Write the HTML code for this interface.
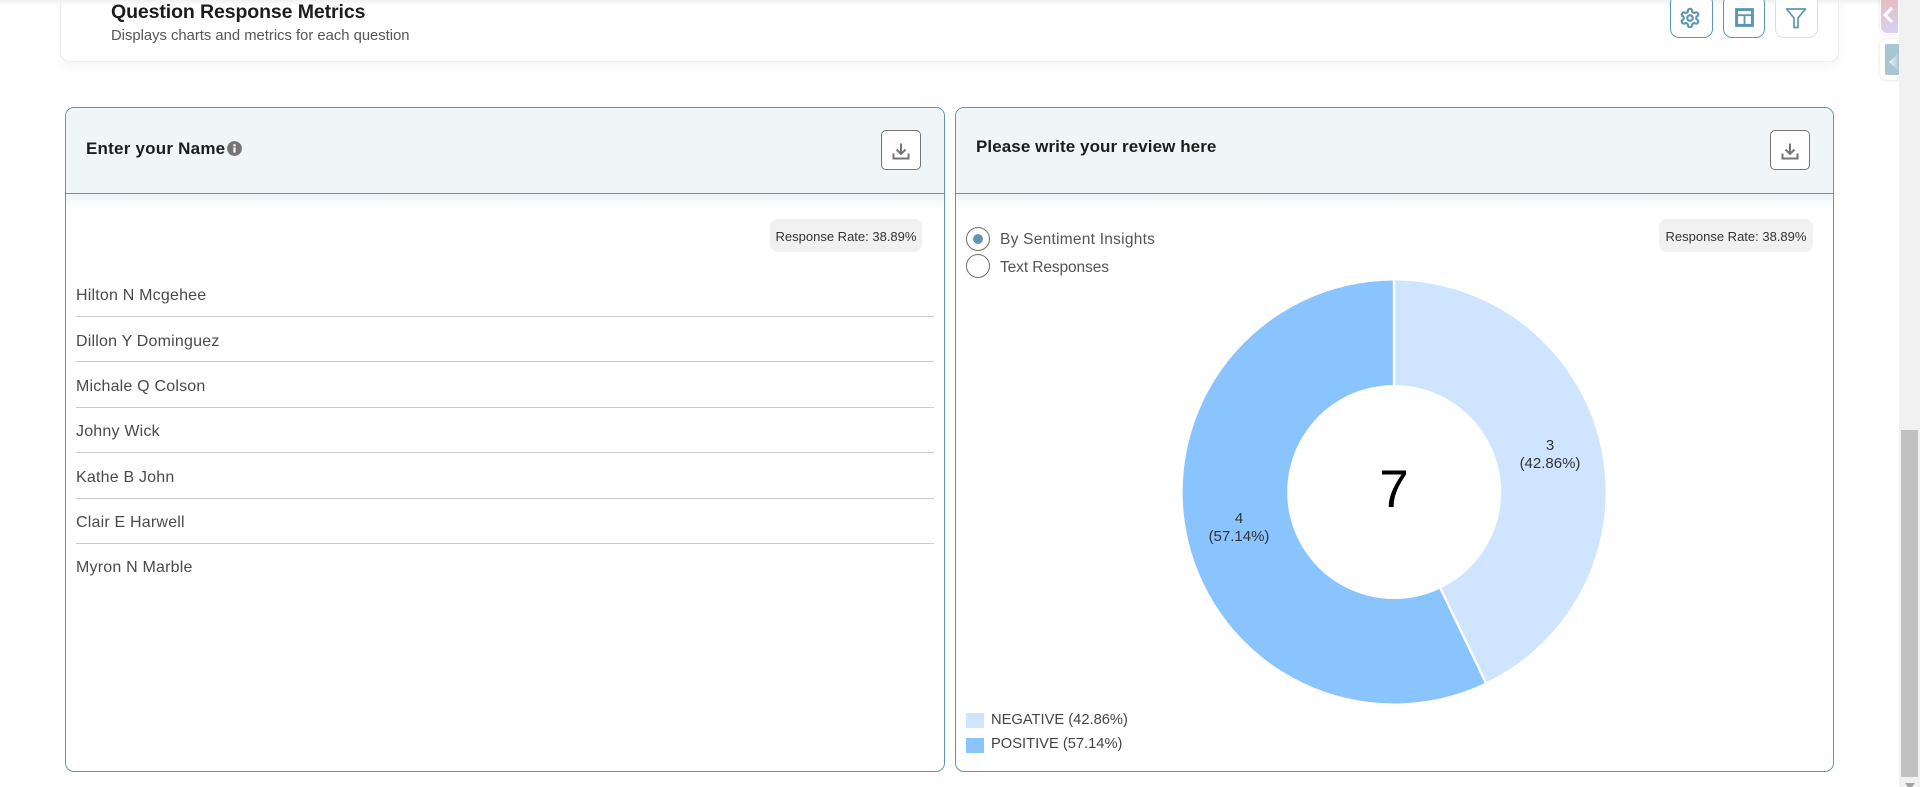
<!DOCTYPE html>
<html lang="en">
<head>
<meta charset="utf-8">
<title>Question Response Metrics</title>
<style>
*{box-sizing:border-box}
html,body{margin:0;padding:0;width:1920px;height:787px;overflow:hidden;background:#fff;font-family:"Liberation Sans",Arial,sans-serif;color:#444}
.a{position:absolute;white-space:nowrap}
.card{position:absolute;left:60px;top:-40px;width:1779px;height:102px;background:#fff;border:1px solid #ebedef;border-radius:10px;box-shadow:0 5px 10px rgba(60,70,90,.05)}
.topshade{position:absolute;left:0;top:0;width:1899px;height:6px;background:linear-gradient(#f1f1f2,rgba(255,255,255,0))}
.panel{position:absolute;top:107px;height:665px;background:#fff;border:1px solid #5f97b3;border-radius:9px;overflow:hidden}
.phead{position:absolute;left:0;top:0;right:0;height:86px;background:#f0f5f8;border-bottom:1px solid #5f97b3}
.pshade{position:absolute;left:0;right:0;top:86px;height:16px;background:linear-gradient(#eff4f7,rgba(255,255,255,0))}
.dl{position:absolute;top:130px;width:40px;height:40px;border:1px solid #757575;border-radius:5px;background:#fff}
.pill{position:absolute;top:219px;height:33px;width:152px;background:#f1f1f1;border-radius:8px;font-size:13px;line-height:35px;color:#333;text-align:center}
.title{font-weight:bold;font-size:17px;line-height:20px;color:#1c1c1c}
.row{position:absolute;left:76px;font-size:16px;letter-spacing:.2px;line-height:20px;color:#4a4a4a;white-space:nowrap}
.line{position:absolute;left:76px;width:858px;height:1px;background:#c9c9c9}
.ib{position:absolute;top:-6px;width:43px;height:44px;border:1px solid #5f97b3;border-radius:9px;background:#fff}
.radio{position:absolute;left:966px;width:24px;height:24px;border:1px solid #6f6f6f;border-radius:50%;background:#fff}
.lab{position:absolute;left:1000px;font-size:15.5px;line-height:20px;color:#555;white-space:nowrap}
.leg{position:absolute;left:991px;font-size:14.7px;line-height:18px;color:#444;white-space:nowrap}
</style>
</head>
<body>

<div class="card"></div>
<div class="topshade"></div>

<div class="a" style="left:111px;top:0;font-weight:bold;font-size:19.5px;line-height:24px;color:#1c1c1c;letter-spacing:-.1px">Question Response Metrics</div>
<div class="a" style="left:111px;top:27px;font-size:14.8px;line-height:18px;color:#555">Displays charts and metrics for each question</div>

<div class="ib" style="left:1670px">
<svg style="position:absolute;left:8px;top:12px" width="22" height="22" viewBox="0 0 24 24" fill="none" stroke="#5f97b3" stroke-width="2.4"><path d="M12.22 2h-.44a2 2 0 0 0-2 2v.18a2 2 0 0 1-1 1.73l-.43.25a2 2 0 0 1-2 0l-.15-.08a2 2 0 0 0-2.73.73l-.22.38a2 2 0 0 0 .73 2.73l.15.1a2 2 0 0 1 1 1.72v.51a2 2 0 0 1-1 1.74l-.15.09a2 2 0 0 0-.73 2.73l.22.38a2 2 0 0 0 2.73.73l.15-.08a2 2 0 0 1 2 0l.43.25a2 2 0 0 1 1 1.73V20a2 2 0 0 0 2 2h.44a2 2 0 0 0 2-2v-.18a2 2 0 0 1 1-1.73l.43-.25a2 2 0 0 1 2 0l.15.08a2 2 0 0 0 2.73-.73l.22-.39a2 2 0 0 0-.73-2.73l-.15-.08a2 2 0 0 1-1-1.74v-.5a2 2 0 0 1 1-1.74l.15-.09a2 2 0 0 0 .73-2.73l-.22-.38a2 2 0 0 0-2.73-.73l-.15.08a2 2 0 0 1-2 0l-.43-.25a2 2 0 0 1-1-1.73V4a2 2 0 0 0-2-2z"/><circle cx="12" cy="12" r="3"/></svg>
</div>
<div class="ib" style="left:1723px;width:42px">
<svg style="position:absolute;left:11px;top:13px" width="19" height="19" viewBox="0 0 19 19" fill="none" stroke="#5f97b3"><rect x="1.6" y="1.6" width="15.8" height="15.8" stroke-width="3"/><path d="M1.6 7.2H17.4M9.5 7.2V17.4" stroke-width="1.8"/></svg>
</div>
<div class="ib" style="left:1775px;border-color:#d3e2ea">
<svg style="position:absolute;left:9px;top:12px" width="22" height="22" viewBox="0 0 22 22" fill="none" stroke="#5f97b3" stroke-width="1.7" stroke-linejoin="round"><path d="M1.5 2H20.5L13 11V20.5H9V11Z"/></svg>
</div>

<!-- Panel 1 -->
<div class="panel" style="left:65px;width:880px"><div class="phead"></div><div class="pshade"></div></div>
<div class="a title" style="left:86px;top:139px;letter-spacing:.22px">Enter your Name</div>
<svg class="a" style="left:227px;top:141px" width="15" height="15" viewBox="0 0 15 15"><circle cx="7.5" cy="7.5" r="7.4" fill="#757575"/><rect x="6.4" y="3.2" width="2.2" height="2.2" fill="#fff"/><rect x="6.4" y="6.4" width="2.2" height="5.2" fill="#fff"/></svg>
<div class="dl" style="left:881px"><svg style="position:absolute;left:10px;top:11px" width="18" height="18" viewBox="0 0 18 18" fill="none" stroke="#757575" stroke-width="2"><path d="M9 1.5V12M4.5 7.5 9 12l4.5-4.5M1.5 11.5V16.5H16.5V11.5"/></svg></div>
<div class="pill" style="left:770px">Response Rate: 38.89%</div>

<div class="row" style="top:286px">Hilton N Mcgehee</div><div class="line" style="top:316px"></div>
<div class="row" style="top:332px">Dillon Y Dominguez</div><div class="line" style="top:361px"></div>
<div class="row" style="top:377px">Michale Q Colson</div><div class="line" style="top:407px"></div>
<div class="row" style="top:422px">Johny Wick</div><div class="line" style="top:452px"></div>
<div class="row" style="top:468px">Kathe B John</div><div class="line" style="top:498px"></div>
<div class="row" style="top:513px">Clair E Harwell</div><div class="line" style="top:543px"></div>
<div class="row" style="top:558px">Myron N Marble</div>

<!-- Panel 2 -->
<div class="panel" style="left:955px;width:879px"><div class="phead"></div><div class="pshade"></div></div>
<div class="a title" style="left:976px;top:137px;letter-spacing:.08px">Please write your review here</div>
<div class="dl" style="left:1770px"><svg style="position:absolute;left:10px;top:11px" width="18" height="18" viewBox="0 0 18 18" fill="none" stroke="#757575" stroke-width="2"><path d="M9 1.5V12M4.5 7.5 9 12l4.5-4.5M1.5 11.5V16.5H16.5V11.5"/></svg></div>
<div class="pill" style="left:1659px;width:154px">Response Rate: 38.89%</div>

<div class="radio" style="top:227px"><div style="position:absolute;left:6px;top:6px;width:10px;height:10px;border-radius:50%;background:#5f97b3"></div></div>
<div class="radio" style="top:254px"></div>
<div class="lab" style="top:230px;letter-spacing:.25px">By Sentiment Insights</div>
<div class="lab" style="top:258px;letter-spacing:-.1px">Text Responses</div>

<svg class="a" style="left:1150px;top:260px" width="490" height="470" viewBox="1150 260 490 470">
<path d="M1394 280.5A211.5 211.5 0 0 1 1485.8 682.6L1440.6 588.4A107 107 0 0 0 1394 385Z" fill="#cfe5ff"/>
<path d="M1485.8 682.6A211.5 211.5 0 1 1 1394 280.5V385A107 107 0 1 0 1440.6 588.4Z" fill="#89c4ff"/>
<path d="M1394 280V385.5M1486.4 683.8 1440.3 588" stroke="#fff" stroke-width="2.4" fill="none"/>
<text x="1394" y="507" text-anchor="middle" font-family="Liberation Sans, Arial, sans-serif" font-size="53" fill="#000">7</text>
<g font-family="Liberation Sans, Arial, sans-serif" font-size="15" fill="#333" text-anchor="middle">
<text x="1550" y="450">3</text><text x="1550" y="468">(42.86%)</text>
<text x="1239" y="523">4</text><text x="1239" y="541">(57.14%)</text>
</g>
</svg>

<div class="a" style="left:966px;top:713px;width:18px;height:15px;background:#cfe5ff"></div>
<div class="a" style="left:966px;top:738px;width:18px;height:15px;background:#89c4ff"></div>
<div class="leg" style="top:711px">NEGATIVE (42.86%)</div>
<div class="leg" style="top:735px">POSITIVE (57.14%)</div>

<!-- side tabs -->
<div class="a" style="left:1880px;top:-4px;width:19px;height:38px;background:#fff;border-radius:0 0 0 7px;box-shadow:0 0 3px rgba(0,0,0,.12)"></div>
<div class="a" style="left:1881px;top:0;width:17px;height:33px;background:linear-gradient(#e8bcc6,#d6d2f5);border-radius:0 0 0 6px"></div>
<svg class="a" style="left:1882px;top:6px" width="12" height="18" viewBox="0 0 12 18"><path d="M10 2 3 9l7 7" fill="none" stroke="#fff" stroke-width="3"/></svg>
<div class="a" style="left:1880px;top:39px;width:19px;height:41px;background:#fff;border-radius:6px 0 0 6px;box-shadow:0 0 3px rgba(0,0,0,.14)"></div>
<div class="a" style="left:1885px;top:44px;width:14px;height:31px;background:#a8c5d2;border-radius:2px 0 0 2px"></div>
<svg class="a" style="left:1889px;top:54px" width="10" height="16" viewBox="0 0 10 16"><defs><linearGradient id="g" x1="0" x2="1" y1="0" y2="0"><stop offset="0" stop-color="#eef3f5"/><stop offset="1" stop-color="#b4ccd7"/></linearGradient></defs><path d="M9 0V16L0 8Z" fill="url(#g)"/></svg>

<!-- scrollbar -->
<div class="a" style="left:1899px;top:0;width:21px;height:787px;background:#f1f1f1"></div>
<div class="a" style="left:1901px;top:430px;width:17px;height:347px;background:#c1c1c1"></div>
<svg class="a" style="left:1904px;top:783px" width="12" height="4" viewBox="0 0 12 4"><path d="M1 0H11L8 4H4Z" fill="#a3a3a3"/></svg>

</body>
</html>
